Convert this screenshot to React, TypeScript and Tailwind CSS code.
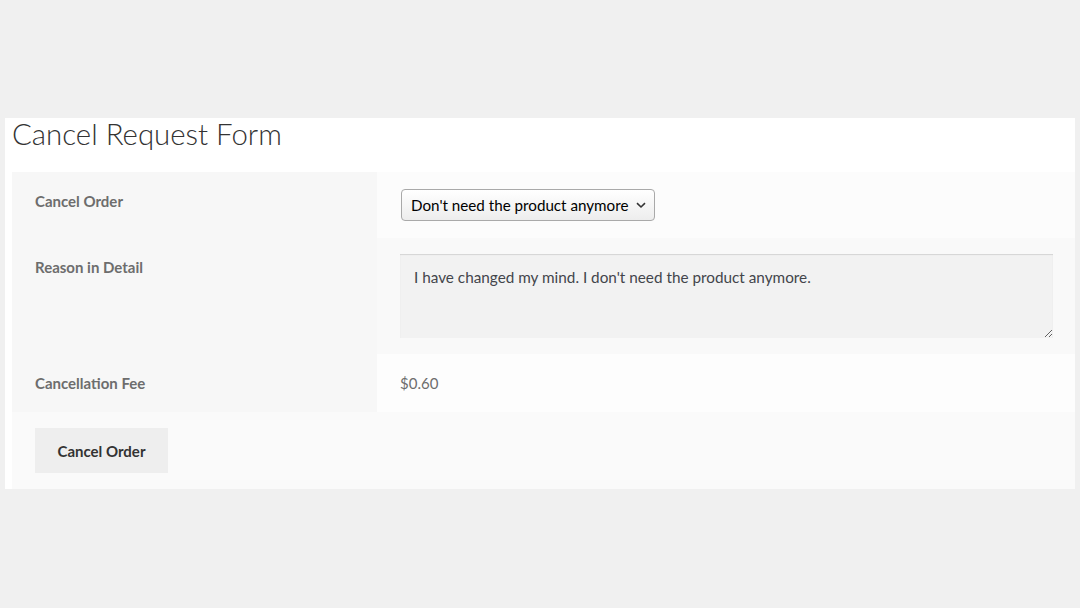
import React from "react";

export default function App() {
  const font = { fontFamily: "Lato, 'Open Sans', sans-serif" };
  return (
    <div className="min-h-[608px] w-[1080px] bg-[#f0f0f0] pt-[118px] pb-[119px]" style={font}>
      <div className="ml-[5px] w-[1070px] bg-white pl-[7px]">
        <h2 className="h-[54px] text-[29.4px] leading-[32px] font-light text-[#333333]">
          Cancel Request Form
        </h2>
        <table className="w-full table-fixed border-collapse text-[15px] leading-[24px]">
          <colgroup>
            <col className="w-[365px]" />
            <col />
          </colgroup>
          <tbody>
            <tr>
              <th className="bg-[#f7f7f7] px-[23px] py-[17px] text-left align-top text-[15px] font-bold text-[#6d6d6d]">
                Cancel Order
              </th>
              <td className="bg-[#fcfcfc] px-[23px] py-[17px] align-top">
                <div className="relative ml-[1px] inline-block">
                  <select
                    defaultValue="a"
                    className="h-[32px] w-[254px] appearance-none rounded-[4px] border border-[#a9a9a9] bg-gradient-to-b from-white to-[#ededed] pl-[9px] pr-[24px] text-[15.2px] text-black"
                    style={font}
                  >
                    <option value="a">Don't need the product anymore</option>
                  </select>
                  <svg
                    className="pointer-events-none absolute right-[9px] top-[13px]"
                    width="10"
                    height="7"
                    viewBox="0 0 10 7"
                  >
                    <path d="M1 1.2 L5 5 L9 1.2" fill="none" stroke="#333" strokeWidth="1.6" />
                  </svg>
                </div>
              </td>
            </tr>
            <tr>
              <th className="bg-[#f7f7f7] px-[23px] py-[17px] text-left align-top text-[15px] font-bold text-[#6d6d6d]">
                Reason in Detail
              </th>
              <td className="bg-[#f9f9f9] px-[23px] pt-[16px] pb-[16px] align-top">
                <textarea
                  className="block h-[84px] w-[653px] border-0 bg-[#f2f2f2] px-[14px] py-[11px] text-[15.3px] leading-[24px] text-[#43454b] shadow-[inset_0_1px_1px_rgba(0,0,0,0.125)] outline-none"
                  style={font}
                  defaultValue="I have changed my mind. I don't need the product anymore."
                />
              </td>
            </tr>
            <tr>
              <th className="bg-[#f7f7f7] px-[23px] py-[17px] text-left align-top text-[15px] font-bold text-[#6d6d6d]">
                Cancellation Fee
              </th>
              <td className="bg-[#fdfdfd] px-[23px] py-[17px] align-top text-[#6d6d6d]">$0.60</td>
            </tr>
            <tr>
              <td colSpan={2} className="bg-[#fafafa] px-[23px] py-[16px]">
                <button className="h-[45px] w-[133px] bg-[#eeeeee] text-[15px] font-bold text-[#333333]">
                  Cancel Order
                </button>
              </td>
            </tr>
          </tbody>
        </table>
      </div>
    </div>
  );
}
